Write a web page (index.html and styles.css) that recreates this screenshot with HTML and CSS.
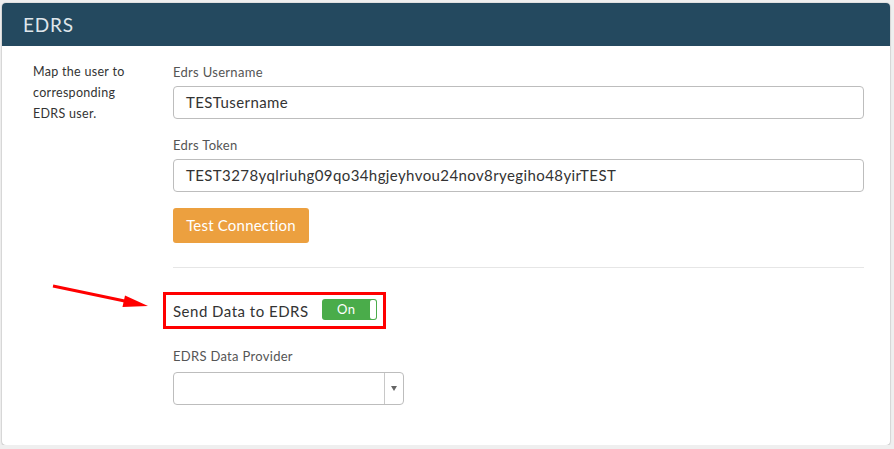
FILE: index.html
```html
<!DOCTYPE html>
<html>
<head>
<meta charset="utf-8">
<link rel="stylesheet" href="styles.css">
</head>
<body>
<div class="panel">
  <div class="panel-header">EDRS</div>
  <div class="panel-body">
    <div class="desc">Map the user to<br>corresponding<br>EDRS user.</div>
    <div class="form">
      <div class="group">
        <div class="label">Edrs Username</div>
        <div class="input">TESTusername</div>
      </div>
      <div class="group">
        <div class="label">Edrs Token</div>
        <div class="input">TEST3278yqlriuhg09qo34hgjeyhvou24nov8ryegiho48yirTEST</div>
      </div>
      <div class="btn">Test Connection</div>
      <div class="rule"></div>
      <div class="highlight">
        <span class="send">Send Data to EDRS</span>
        <div class="toggle"><span class="on">On</span><span class="handle"></span></div>
      </div>
      <div class="label provider">EDRS Data Provider</div>
      <div class="select"><span class="select-text"></span><span class="caret-box"><span class="caret"></span></span></div>
    </div>
  </div>
  <svg class="arrow" width="160" height="40" viewBox="0 0 160 40">
    <line x1="8" y1="7" x2="82" y2="22.5" stroke="#f00" stroke-width="3" />
    <polygon points="103,27 80,16.5 77.5,28" fill="#f00" />
  </svg>
</div>
</body>
</html>
```
FILE: styles.css
```css
html, body {
  margin: 0;
  padding: 0;
  background: #efefef;
}
body {
  font-family: "Lato", "Open Sans", sans-serif;
  color: #333;
}
.panel {
  position: relative;
  margin: 3px 4px 0 2px;
  width: 888px;
  height: 442px;
  background: #fff;
  border-radius: 4px;
  box-shadow: 0 1px 2px rgba(0,0,0,0.18), 0 0 0 1px #e2e2e2;
  box-sizing: border-box;
}
.panel-header {
  height: 43px;
  background: #24495f;
  color: #dfe6eb;
  font-size: 19px;
  letter-spacing: 0.8px;
  line-height: 43px;
  padding-left: 21px;
  border-radius: 4px 4px 0 0;
}
.panel-body {
  display: flex;
  padding-left: 31px;
}
.desc {
  flex: 0 0 140px;
  width: 140px;
  font-size: 12.5px;
  letter-spacing: 0.3px;
  line-height: 21px;
  padding-top: 15px;
  color: #333;
}
.form {
  width: 691px;
  padding-top: 18px;
}
.label {
  font-size: 13px;
  letter-spacing: 0.3px;
  line-height: 17px;
  color: #555;
  margin-bottom: 5px;
}
.group {
  margin-bottom: 18px;
}
.input {
  height: 33px;
  box-sizing: border-box;
  border: 1px solid #bdbdbd;
  border-radius: 4px;
  font-size: 15px;
  letter-spacing: 0.4px;
  line-height: 31px;
  padding-left: 12px;
  color: #333;
}
.btn {
  display: inline-block;
  margin-top: -2px;
  height: 35px;
  line-height: 35px;
  width: 136px;
  text-align: center;
  background: #eca03f;
  color: #fff;
  font-size: 15px;
  letter-spacing: 0.2px;
  border-radius: 3px;
}
.rule {
  height: 1px;
  background: #e6e6e6;
  margin-top: 24px;
  margin-bottom: 24px;
}
.highlight {
  display: inline-flex;
  align-items: center;
  margin-left: -10px;
  border: 3px solid #f00;
  height: 37px;
  box-sizing: border-box;
  padding: 0 6px 0 7px;
}
.send {
  font-size: 15px;
  letter-spacing: 0.5px;
  color: #333;
  margin-right: 13px;
  margin-top: 1px;
}
.toggle {
  display: flex;
  align-items: stretch;
  width: 55px;
  height: 21px;
  box-sizing: border-box;
  background: #4aac4a;
  border-radius: 3px;
  padding: 1px;
  margin-top: -3px;
}
.on {
  flex: 1;
  text-align: center;
  color: #fff;
  font-size: 13px;
  letter-spacing: 0.5px;
  line-height: 19px;
}
.handle {
  width: 6px;
  background: #fff;
  border-radius: 2px;
}
.provider {
  margin-top: 19px;
  margin-bottom: 7px;
}
.select {
  display: flex;
  width: 231px;
  height: 33px;
  box-sizing: border-box;
  border: 1px solid #bdbdbd;
  border-radius: 4px;
}
.select-text {
  flex: 1;
}
.caret-box {
  width: 18px;
  border-left: 1px solid #c8c8c8;
  display: flex;
  align-items: center;
  justify-content: center;
}
.caret {
  width: 0;
  height: 0;
  border-left: 3px solid transparent;
  border-right: 3px solid transparent;
  border-top: 5px solid #666;
}
.arrow {
  position: absolute;
  left: 43px;
  top: 276px;
}
```
